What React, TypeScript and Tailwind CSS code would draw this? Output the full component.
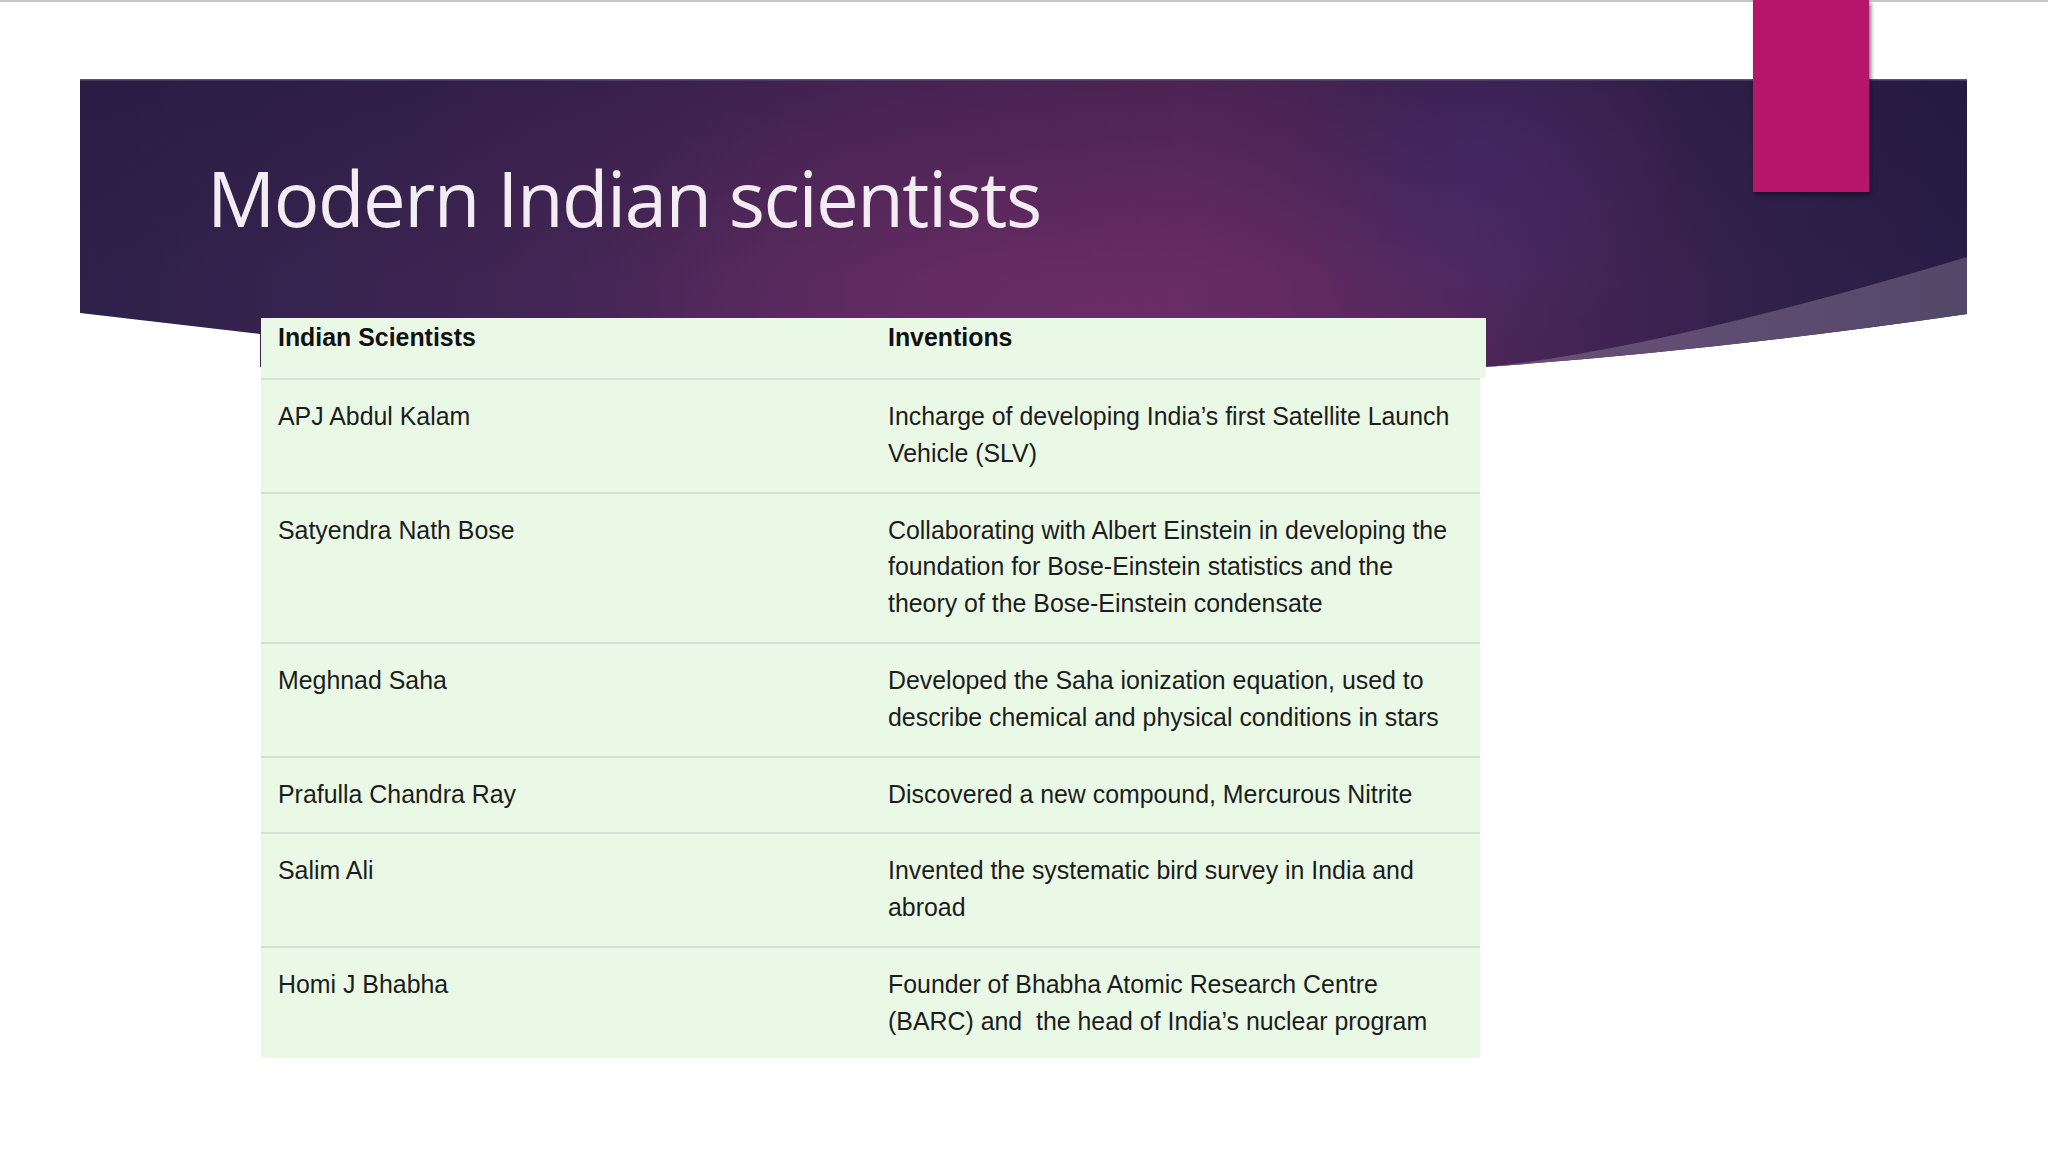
import React from "react";

type Row = { name: string; lines: string[] };

const rows: Row[] = [
  { name: "APJ Abdul Kalam", lines: ["Incharge of developing India\u2019s first Satellite Launch", "Vehicle (SLV)"] },
  {
    name: "Satyendra Nath Bose",
    lines: [
      "Collaborating with Albert Einstein in developing the",
      "foundation for Bose-Einstein statistics and the",
      "theory of the Bose-Einstein condensate",
    ],
  },
  {
    name: "Meghnad Saha",
    lines: ["Developed the Saha ionization equation, used to", "describe chemical and physical conditions in stars"],
  },
  { name: "Prafulla Chandra Ray", lines: ["Discovered a new compound, Mercurous Nitrite"] },
  { name: "Salim Ali", lines: ["Invented the systematic bird survey in India and", "abroad"] },
  {
    name: "Homi J Bhabha",
    lines: ["Founder of Bhabha Atomic Research Centre", "(BARC) and \u00a0the head of India\u2019s nuclear program"],
  },
];

function Banner() {
  const shape = "M80,79 L1967,79 L1967,314 Q1720,350 1486,367 L260,367 L260,334 L80,313 Z";
  return (
    <svg className="absolute left-0 top-0" width="2048" height="400" viewBox="0 0 2048 400">
      <defs>
        <clipPath id="bannerClip">
          <path d={shape} />
        </clipPath>
        <linearGradient id="bannerBase" x1="0" y1="0" x2="1" y2="0">
          <stop offset="0" stopColor="#2a2048" />
          <stop offset="0.2" stopColor="#3b2451" />
          <stop offset="0.42" stopColor="#55295d" />
          <stop offset="0.58" stopColor="#622b62" />
          <stop offset="0.72" stopColor="#4c2659" />
          <stop offset="0.87" stopColor="#30204a" />
          <stop offset="1" stopColor="#231c44" />
        </linearGradient>
        <linearGradient id="bannerShade" x1="0" y1="0" x2="0" y2="1">
          <stop offset="0" stopColor="#1e1538" stopOpacity="0.35" />
          <stop offset="1" stopColor="#1e1538" stopOpacity="0" />
        </linearGradient>
        <radialGradient id="bannerMagenta" cx="1060" cy="360" r="460" gradientUnits="userSpaceOnUse">
          <stop offset="0" stopColor="#6f2d66" stopOpacity="0.7" />
          <stop offset="1" stopColor="#6f2d66" stopOpacity="0" />
        </radialGradient>
        <radialGradient id="bannerGlow" cx="1480" cy="150" r="200" gradientUnits="userSpaceOnUse">
          <stop offset="0" stopColor="#4d2c6e" stopOpacity="0.9" />
          <stop offset="1" stopColor="#4d2c6e" stopOpacity="0" />
        </radialGradient>
        <linearGradient id="bandFill" x1="0" y1="0" x2="1" y2="0">
          <stop offset="0" stopColor="#6b5079" />
          <stop offset="1" stopColor="#534869" />
        </linearGradient>
      </defs>
      <g clipPath="url(#bannerClip)">
        <rect x="0" y="0" width="2048" height="400" fill="url(#bannerBase)" />
        <rect x="0" y="0" width="2048" height="400" fill="url(#bannerMagenta)" />
        <rect x="0" y="0" width="2048" height="400" fill="url(#bannerGlow)" />
        <rect x="0" y="79" width="2048" height="200" fill="url(#bannerShade)" />
        <rect x="80" y="79" width="1887" height="1.5" fill="#5c5570" />
      </g>
      <path d="M1967,257 Q1658,350 1486,367 Q1720,350 1967,314 Z" fill="url(#bandFill)" />
    </svg>
  );
}

export default function App() {
  return (
    <div className="relative h-[1152px] w-[2048px] overflow-hidden bg-white">
      <div className="relative z-10 h-[2px] w-full bg-[#c6c6c6]" />
      <Banner />
      <div className="absolute left-[1753px] top-0 z-10 h-[192px] w-[116px] bg-[#b5166b] shadow-[2px_3px_4px_rgba(10,5,30,0.55)]" />

      <div className="relative flex flex-col">
        <h1
          className="ml-[207px] mt-[158px] text-[76px] font-normal leading-none tracking-[-1.5px] text-[#f3ecf3]"
          style={{ fontFamily: '"Open Sans", "Noto Sans", sans-serif' }}
        >
          Modern Indian scientists
        </h1>

        <div
          className="ml-[261px] mt-[82px] flex flex-col text-[24.9px] text-[#1c1c1c]"
          style={{ fontFamily: '"Liberation Sans", Arial, sans-serif' }}
        >
          <div className="grid w-[1225px] grid-cols-[610px_1fr] bg-[#eaf9e6] pb-[22px] pt-[1px] font-bold leading-[37px] text-[#111]">
            <div className="pl-[17px]">Indian Scientists</div>
            <div className="pl-[17px]">Inventions</div>
          </div>
          <div className="flex w-[1219px] flex-col bg-[#eaf9e6] shadow-[0_1px_3px_rgba(0,0,0,0.06)]">
            {rows.map((r, i) => (
              <div
                key={r.name}
                className={`grid grid-cols-[610px_1fr] border-t-2 border-[#d6e2d6] pt-[18px] leading-[36.8px] ${
                  i === rows.length - 1 ? "pb-[17px]" : "pb-[20px]"
                }`}
              >
                <div className="pl-[17px]">{r.name}</div>
                <div className="pl-[17px]">
                  {r.lines.map(l => (
                    <div key={l} className="whitespace-pre">
                      {l}
                    </div>
                  ))}
                </div>
              </div>
            ))}
          </div>
        </div>
      </div>
    </div>
  );
}
